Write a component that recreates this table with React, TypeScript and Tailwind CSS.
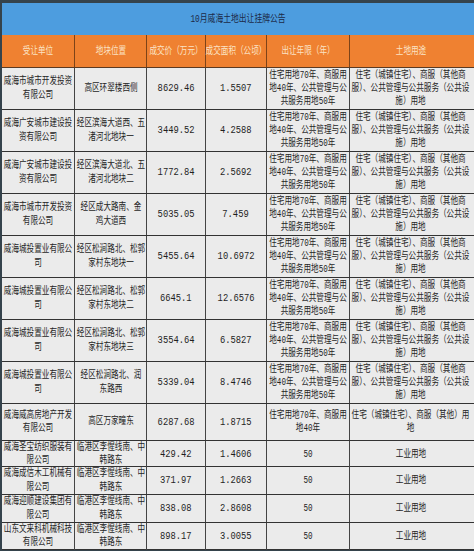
import React from "react";

type Row = {
  h: string;
  c1: string[];
  c2: string[];
  price: string;
  area: string;
  years: string[];
  use: string[];
};

const Y3 = ["住宅用地70年、商服用", "地40年、公共管理与公", "共服务用地50年"];
const U3 = ["住宅（城镇住宅）、商服（其他商", "服）、公共管理与公共服务（公共设", "施）用地"];
const LG = ["临港区李惺线南、中", "韩路东"];

const rows: Row[] = [
  { h: "h-[42px]", c1: ["威海市城市开发投资", "有限公司"], c2: ["高区环翠楼西侧"], price: "8629.46", area: "1.5507", years: Y3, use: U3 },
  { h: "h-[42px]", c1: ["威海广安城市建设投", "资有限公司"], c2: ["经区滨海大道西、五", "渚河北地块一"], price: "3449.52", area: "4.2588", years: Y3, use: U3 },
  { h: "h-[42px]", c1: ["威海广安城市建设投", "资有限公司"], c2: ["经区滨海大道北、五", "渚河北地块二"], price: "1772.84", area: "2.5692", years: Y3, use: U3 },
  { h: "h-[42px]", c1: ["威海市城市开发投资", "有限公司"], c2: ["经区成大路南、金", "鸡大道西"], price: "5035.05", area: "7.459", years: Y3, use: U3 },
  { h: "h-[42px]", c1: ["威海城投置业有限公", "司"], c2: ["经区松涧路北、松郭", "家村东地块一"], price: "5455.64", area: "10.6972", years: Y3, use: U3 },
  { h: "h-[42px]", c1: ["威海城投置业有限公", "司"], c2: ["经区松涧路北、松郭", "家村东地块二"], price: "6645.1", area: "12.6576", years: Y3, use: U3 },
  { h: "h-[42px]", c1: ["威海城投置业有限公", "司"], c2: ["经区松涧路北、松郭", "家村东地块三"], price: "3554.64", area: "6.5827", years: Y3, use: U3 },
  { h: "h-[42px]", c1: ["威海城投置业有限公", "司"], c2: ["经区松涧路北、润", "东路西"], price: "5339.04", area: "8.4746", years: Y3, use: U3 },
  { h: "h-[37px]", c1: ["威海威高房地产开发", "有限公司"], c2: ["高区万家疃东"], price: "6287.68", area: "1.8715", years: ["住宅用地70年、商服用", "地40年"], use: ["住宅（城镇住宅）、商服（其他）用", "地"] },
  { h: "h-[26px]", c1: ["威海圣宝纺织服装有", "限公司"], c2: LG, price: "429.42", area: "1.4606", years: ["50"], use: ["工业用地"] },
  { h: "h-[28px]", c1: ["威海成信木工机械有", "限公司"], c2: LG, price: "371.97", area: "1.2663", years: ["50"], use: ["工业用地"] },
  { h: "h-[28px]", c1: ["威海迎顺建设集团有", "限公司"], c2: LG, price: "838.08", area: "2.8608", years: ["50"], use: ["工业用地"] },
  { h: "h-[27px]", c1: ["山东文来科机械科技", "有限公司"], c2: LG, price: "898.17", area: "3.0055", years: ["50"], use: ["工业用地"] },
];

const GRID = "grid grid-cols-[73px_72px_59px_61px_83px_121px]";
const CJK = "font-['Liberation_Mono','Noto_Sans_CJK_SC',monospace]";

function TextCell({ lines, last }: { lines: string[]; last?: boolean }) {
  return (
    <div
      className={
        "flex items-center justify-center text-center min-w-0 " +
        (last ? "" : "border-r border-[#444444]")
      }
    >
      <div className="scale-x-[0.76] whitespace-nowrap text-[10px] leading-[13.3px] text-[#1f1f1f]">
        {lines.map((l, i) => (
          <div key={i}>{l}</div>
        ))}
      </div>
    </div>
  );
}

function NumCell({ v }: { v: string }) {
  return (
    <div className="flex items-center justify-center border-r border-[#444444] min-w-0">
      <div className="scale-x-[0.8] whitespace-nowrap text-[11px] leading-[13px] text-[#1f1f1f] font-['Liberation_Mono',monospace]">
        {v}
      </div>
    </div>
  );
}

function HeadCell({ t, last }: { t: string; last?: boolean }) {
  return (
    <div
      className={
        "flex items-center justify-center min-w-0 " +
        (last ? "" : "border-r border-[#7d4318]")
      }
    >
      <div className="scale-x-[0.76] whitespace-nowrap text-[10px] leading-[13px] text-[#fbe3c6]">{t}</div>
    </div>
  );
}

export default function App() {
  return (
    <div className={"w-[474px] h-[551px] overflow-hidden bg-[#35434c] pt-[3px] pl-[2px] " + CJK}>
      <div className="w-[472px]">
        <div className="h-[32px] bg-[#4d9ddf] flex items-center justify-center">
          <div className="scale-x-[0.78] whitespace-nowrap text-[10px] text-[#1c2a48]">10月威海土地出让挂牌公告</div>
        </div>
        <div className={GRID + " h-[33px] bg-[#ef8131] border-b border-[#5b3a22]"}>
          <HeadCell t="受让单位" />
          <HeadCell t="地块位置" />
          <HeadCell t="成交价（万元）" />
          <HeadCell t="成交面积（公顷）" />
          <HeadCell t="出让年限（年）" />
          <HeadCell t="土地用途" last />
        </div>
        {rows.map((r, i) => (
          <div
            key={i}
            className={GRID + " " + r.h + " bg-[#ebebeb] border-b border-[#333333] border-r-[2px] border-r-[#9a9a9a] w-[474px] -mr-[2px]"}
          >
            <TextCell lines={r.c1} />
            <TextCell lines={r.c2} />
            <NumCell v={r.price} />
            <NumCell v={r.area} />
            <TextCell lines={r.years} />
            <TextCell lines={r.use} last />
          </div>
        ))}
      </div>
    </div>
  );
}
